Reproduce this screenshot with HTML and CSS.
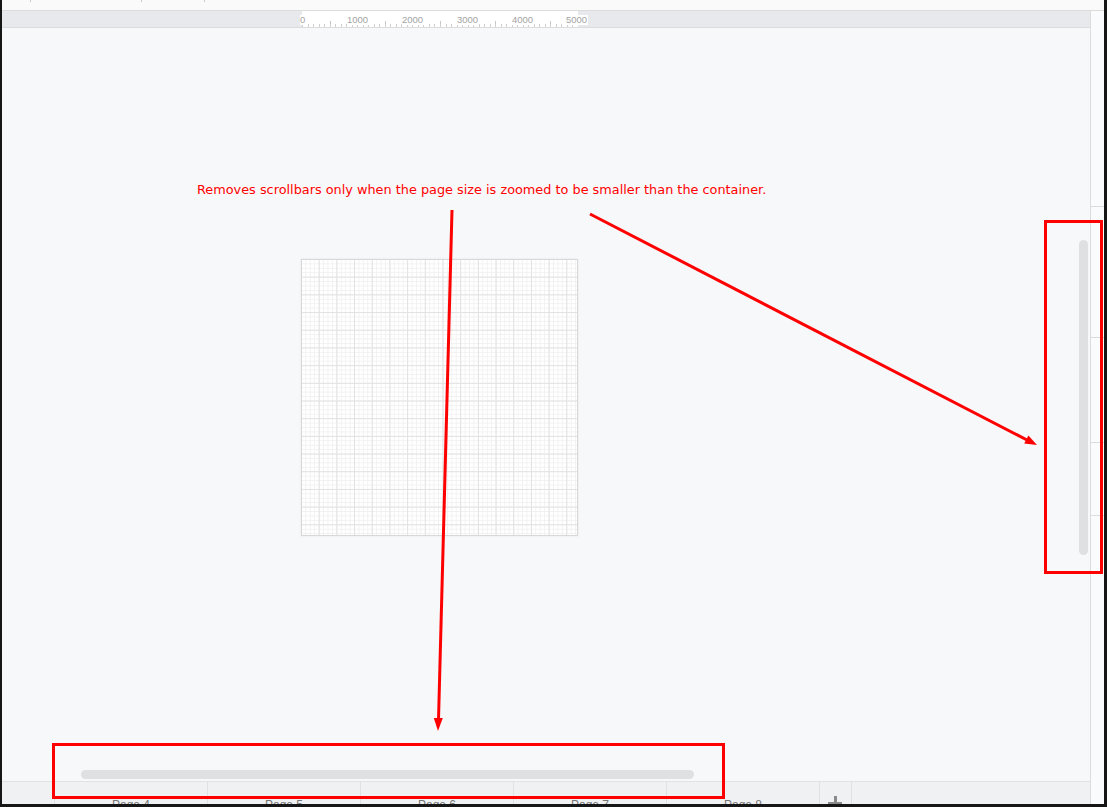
FILE: index.html
```html
<!DOCTYPE html>
<html>
<head>
<meta charset="utf-8">
<link rel="stylesheet" href="styles.css">
</head>
<body>
<div class="app">
  <div class="topstrip"></div>
  <div class="body">
    <div class="main">
      <div class="ruler">
        <div class="ruler-page">
          <span class="rl" style="left:-2px">0</span>
          <span class="rl" style="left:45px">1000</span>
          <span class="rl" style="left:100px">2000</span>
          <span class="rl" style="left:155px">3000</span>
          <span class="rl" style="left:210px">4000</span>
          <span class="rl" style="left:264px">5000</span>
        </div>
      </div>
      <div class="canvas">
        <div class="page"></div>
        <div class="vthumb"></div>
        <div class="hthumb"></div>
      </div>
      <div class="tabs">
        <div class="tab-spacer"></div>
        <div class="tab">Page 4</div>
        <div class="tab">Page 5</div>
        <div class="tab">Page 6</div>
        <div class="tab">Page 7</div>
        <div class="tab">Page 8</div>
        <div class="tab-add"><span class="plus"></span></div>
        <div class="tab-rest"></div>
      </div>
    </div>
    <div class="side">
      <div class="seg seg1"></div>
      <div class="seg seg2"></div>
      <div class="seg seg3"></div>
      <div class="seg seg4"></div>
    </div>
  </div>
</div>
<div class="note">Removes scrollbars only when the page size is zoomed to be smaller than the container.</div>
<svg class="overlay" width="1107" height="807" viewBox="0 0 1107 807">
  <rect x="1045.5" y="221.5" width="56" height="351" fill="none" stroke="#ff0000" stroke-width="3"/>
  <rect x="53.5" y="744.5" width="670" height="53" fill="none" stroke="#ff0000" stroke-width="3"/>
  <line x1="452" y1="210" x2="438.5" y2="720" stroke="#ff0000" stroke-width="3"/>
  <polygon points="438,731 442.8,718 433.8,718" fill="#ff0000"/>
  <line x1="590" y1="214" x2="1027" y2="440" stroke="#ff0000" stroke-width="3"/>
  <polygon points="1037,445 1024.2,443.5 1028.4,435.5" fill="#ff0000"/>
</svg>
</body>
</html>
```
FILE: styles.css
```css
html, body {
  margin: 0;
  padding: 0;
}
body {
  background: #161616;
  width: 1107px;
  height: 807px;
  position: relative;
  overflow: hidden;
  font-family: "Liberation Sans", Arial, sans-serif;
}
.app {
  width: 1102px;
  height: 804px;
  margin-left: 2px;
  display: flex;
  flex-direction: column;
  background: #fafafa;
  overflow: hidden;
}
.topstrip {
  height: 10px;
  flex: none;
  border-bottom: 1px solid #dcdcdc;
  background:
    linear-gradient(#c8c8c8, #c8c8c8) 28px 0 / 1px 2px no-repeat,
    linear-gradient(#c8c8c8, #c8c8c8) 139px 0 / 1px 2px no-repeat,
    linear-gradient(#c8c8c8, #c8c8c8) 202px 0 / 1px 2px no-repeat,
    #fafafa;
}
.body {
  flex: 1;
  display: flex;
  min-height: 0;
}
.main {
  width: 1088px;
  flex: none;
  display: flex;
  flex-direction: column;
}
.ruler {
  height: 16px;
  flex: none;
  background: #e8e9ec;
  border-bottom: 1px solid #dcdcdc;
  position: relative;
}
.ruler-page {
  position: absolute;
  left: 300px;
  top: 0;
  width: 276px;
  height: 16px;
  background:
    repeating-linear-gradient(to right, #d0d0d0 0 1px, transparent 1px 5.52px) 0 13px / 100% 3px no-repeat,
    repeating-linear-gradient(to right, #c6c6c6 0 1px, transparent 1px 27.6px) 0 10px / 100% 6px no-repeat,
    #ffffff;
}
.rl {
  position: absolute;
  top: 4px;
  font-size: 9.5px;
  line-height: 10px;
  color: #a3a3a3;
  background: #fff;
  padding: 0 1px 0 0;
}
.canvas {
  height: 753px;
  flex: none;
  background: #f7f8fa;
  position: relative;
}
.page {
  position: absolute;
  left: 299px;
  top: 231px;
  width: 277px;
  height: 277px;
  box-sizing: border-box;
  border: 1px solid #d8d8d8;
  box-shadow: 0 0 2px rgba(0, 0, 0, 0.08);
  background-color: #ffffff;
  background-image:
    linear-gradient(to right, #e2e2e2 1px, transparent 1px),
    linear-gradient(to bottom, #e2e2e2 1px, transparent 1px),
    linear-gradient(to right, #f1f1f1 1px, transparent 1px),
    linear-gradient(to bottom, #f1f1f1 1px, transparent 1px);
  background-size: 17.7px 17.7px, 17.7px 17.7px, 4.425px 4.425px, 4.425px 4.425px;
  background-position: -1px -1px, -1px -1px, -1px -1px, -1px -1px;
}
.vthumb {
  position: absolute;
  left: 1077px;
  top: 212px;
  width: 9px;
  height: 315px;
  border-radius: 5px;
  background: #dfe0e2;
}
.hthumb {
  position: absolute;
  left: 79px;
  top: 742px;
  width: 613px;
  height: 9px;
  border-radius: 5px;
  background: #dfe0e2;
}
.tabs {
  height: 30px;
  flex: none;
  display: flex;
  background: #f0f1f3;
  border-top: 1px solid #e1e2e4;
}
.tab-spacer {
  width: 52px;
  flex: none;
}
.tab {
  width: 153px;
  flex: none;
  border-left: 1px solid #e0e1e3;
  text-align: center;
  font-size: 12px;
  line-height: 14px;
  color: #777;
  padding-top: 16px;
  box-sizing: border-box;
}
.tab-add {
  width: 33px;
  flex: none;
  box-sizing: border-box;
  border-left: 1px solid #e0e1e3;
  border-right: 1px solid #e0e1e3;
  position: relative;
}
.plus {
  position: absolute;
  left: 8px;
  top: 14px;
  width: 14px;
  height: 14px;
  background:
    linear-gradient(#8a8a8a, #8a8a8a) 5.5px 0 / 3px 14px no-repeat,
    linear-gradient(#8a8a8a, #8a8a8a) 0 5.5px / 14px 3px no-repeat;
}
.tab-rest {
  flex: 1;
}
.side {
  flex: 1;
  border-left: 1px solid #dcdcdc;
  background: #fafbfc;
  display: flex;
  flex-direction: column;
}
.seg {
  flex: none;
  border-bottom: 1px solid #dcdcdc;
}
.seg1 { height: 195px; }
.seg2 { height: 130px; }
.seg3 { height: 104px; }
.seg4 { height: 72px; }
.note {
  position: absolute;
  left: 197px;
  top: 182px;
  font-family: "DejaVu Sans", Verdana, sans-serif;
  font-size: 12.85px;
  line-height: 16px;
  color: #ff0000;
  white-space: nowrap;
}
.overlay {
  position: absolute;
  left: 0;
  top: 0;
  pointer-events: none;
}
```
